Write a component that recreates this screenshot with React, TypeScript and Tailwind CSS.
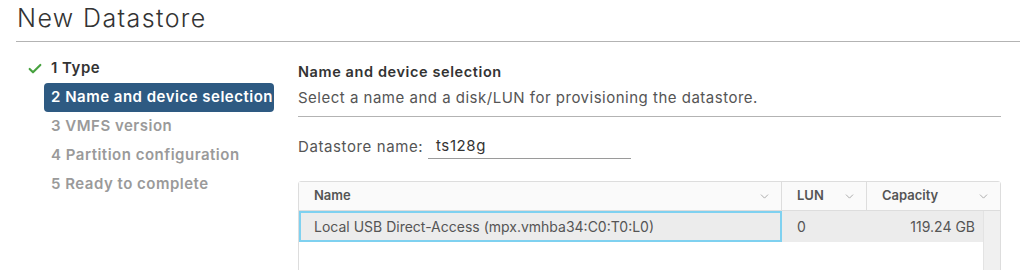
import { Check, ChevronDown } from 'lucide-react';

const steps = [
  { label: '1 Type', done: true },
  { label: '2 Name and device selection', active: true },
  { label: '3 VMFS version' },
  { label: '4 Partition configuration' },
  { label: '5 Ready to complete' },
];

function HeaderCell({ label, className }: { label: string; className: string }) {
  return (
    <div className={`flex items-center justify-between pl-[15px] pr-[10px] ${className}`}>
      <span className="text-[13px] font-semibold text-[#555]">{label}</span>
      <ChevronDown size={13} strokeWidth={1.5} className="text-[#9a9a9a]" />
    </div>
  );
}

export default function App() {
  return (
    <div className="w-[1024px] h-[270px] overflow-hidden bg-white font-['Inter',sans-serif] text-[#333]">
      <div className="ml-[16px] mr-[4px] h-[42px] border-b border-[#b3b3b3]">
        <h1 className="pl-[1px] pt-[2px] text-[25px] leading-[32px] font-light tracking-[1.4px] text-[#333]">
          New Datastore
        </h1>
      </div>

      <div className="flex">
        {/* wizard steps */}
        <ul className="w-[298px] pl-[27px] pt-[12px]">
          {steps.map(step => (
            <li key={step.label} className="flex items-center h-[29px]">
              <span className="w-[17px] flex items-center">
                {step.done && <Check size={16} strokeWidth={3.2} className="text-[#47a23f]" />}
              </span>
              <span
                className={`h-[29px] flex items-center px-[7px] rounded-[4px] text-[15px] font-semibold tracking-[0.5px] whitespace-nowrap ${
                  step.active
                    ? 'bg-[#2e5a82] text-white w-[230px]'
                    : step.done
                      ? 'text-[#333]'
                      : 'text-[#9a9a9a]'
                }`}
              >
                {step.label}
              </span>
            </li>
          ))}
        </ul>

        {/* content */}
        <div className="w-[703px] pt-[20px]">
          <h2 className="text-[14.5px] leading-[20px] font-semibold tracking-[0.6px] text-[#333]">
            Name and device selection
          </h2>
          <div className="h-[35px] border-b border-[#b3b3b3] pt-[6px]">
            <p className="text-[15px] leading-[20px] tracking-[0.5px] text-[#555]">
              Select a name and a disk/LUN for provisioning the datastore.
            </p>
          </div>

          <div className="flex items-center mt-[18px] h-[24px] text-[15px] tracking-[0.6px]">
            <span className="text-[#555] w-[130px]">Datastore name:</span>
            <div className="w-[203px] border-b border-[#9a9a9a] h-[24px] flex items-center pl-[8px] text-[#333]">
              ts128g
            </div>
          </div>

          <div className="mt-[22px] border border-[#dddddd] rounded-t-[3px] h-[100px]">
            <div className="flex h-[29px] bg-[#fafafa] border-b border-[#dddddd]">
              <HeaderCell label="Name" className="w-[483px] border-r border-[#dddddd]" />
              <HeaderCell label="LUN" className="w-[85px] border-r border-[#dddddd]" />
              <HeaderCell label="Capacity" className="flex-1" />
            </div>
            <div className="flex">
              <div className="w-[684px] flex h-[31px] bg-[#ececec] text-[14px] text-[#555]">
                <div className="w-[483px] border-2 border-[#7fd1f0] flex items-center pl-[13px]">
                  Local USB Direct-Access (mpx.vmhba34:C0:T0:L0)
                </div>
                <div className="w-[85px] flex items-center pl-[15px]">0</div>
                <div className="w-[116px] flex items-center justify-end pr-[8px]">119.24 GB</div>
              </div>
              <div className="w-[17px] h-[70px] bg-[#f0f0f0] border-l border-[#e3e3e3]" />
            </div>
          </div>
        </div>
      </div>
    </div>
  );
}
